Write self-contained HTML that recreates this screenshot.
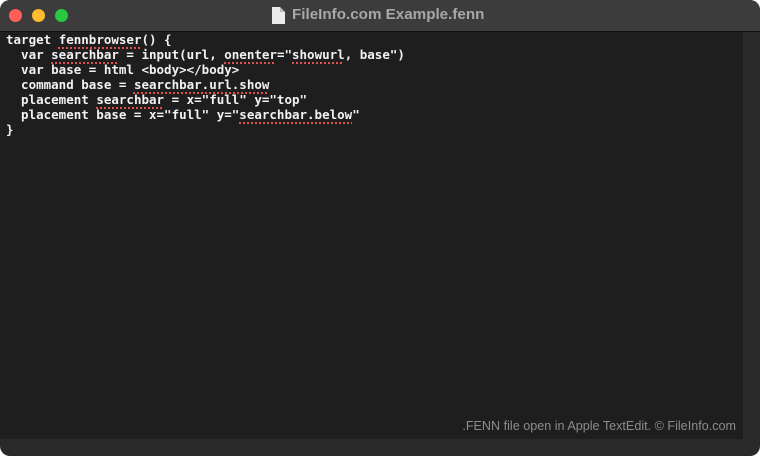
<!DOCTYPE html>
<html><head><style>
html,body{margin:0;padding:0;background:#fff;}
.win{position:absolute;left:0;top:0;width:760px;height:456px;border-radius:10px;overflow:hidden;background:#2a2a2a;}
.title{position:absolute;left:0;top:0;width:760px;height:31px;background:#3c3c3c;border-bottom:1px solid #111;}
.dot{position:absolute;top:9px;width:13px;height:13px;border-radius:50%;}
.ttext{position:absolute;left:292px;top:6px;font:bold 15.2px "Liberation Sans",sans-serif;color:#a8a8a8;}
.content{position:absolute;left:0;top:32px;width:743px;height:407px;background:#1e1e1e;}
pre{position:absolute;left:6px;top:0px;margin:0;font:bold 12.5px/15px "DejaVu Sans Mono",monospace;color:#f2f2f2;}
.u{text-decoration:underline dotted #e05050;text-underline-offset:3px;text-decoration-thickness:2px;}
.foot{position:absolute;right:24px;top:419px;font:12.6px "Liberation Sans",sans-serif;color:#8c8c8c;}
</style></head><body>
<div class="win">
<div class="title">
<div class="dot" style="left:9px;background:#fe5f57"></div>
<div class="dot" style="left:32px;background:#febc2e"></div>
<div class="dot" style="left:55px;background:#28c840"></div>
<svg style="position:absolute;left:272px;top:7px" width="13" height="17"><path d="M0 0H8L13 5V17H0Z" fill="#ececec"/><path d="M8 0V5H13" fill="#bbb"/></svg>
<div class="ttext">FileInfo.com Example.fenn</div>
</div>
<div class="content">
<pre>target <span class="u">fennbrowser</span>() {
  var <span class="u">searchbar</span> = input(url, <span class="u">onenter</span>="<span class="u">showurl</span>, base")
  var base = html &lt;body&gt;&lt;/body&gt;
  command base = <span class="u">searchbar.url.show</span>
  placement <span class="u">searchbar</span> = x="full" y="top"
  placement base = x="full" y="<span class="u">searchbar.below</span>"
}</pre>
</div>
<div class="foot">.FENN file open in Apple TextEdit. © FileInfo.com</div>
</div>
</body></html>
